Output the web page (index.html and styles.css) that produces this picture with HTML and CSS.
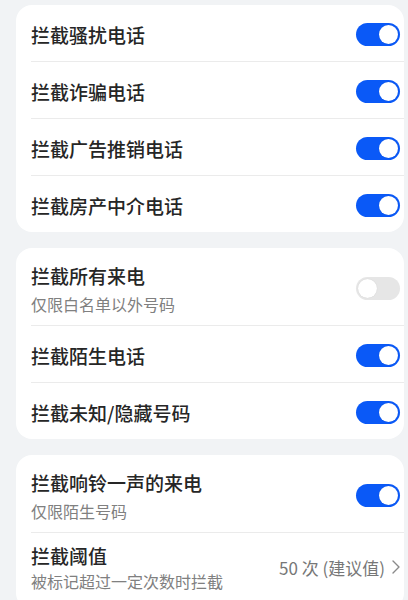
FILE: index.html
```html
<!DOCTYPE html>
<html lang="zh-CN">
<head>
    <meta charset="UTF-8">
    <meta name="viewport" content="width=device-width, initial-scale=1.0">
    <title>拦截设置</title>
    <link rel="stylesheet" href="styles.css">
</head>
<body>
    <div class="settings">
        <!-- 标记号码拦截 -->
        <div class="card">
            <div class="row">
                <span class="title">拦截骚扰电话</span>
                <span class="switch on"></span>
            </div>
            <div class="row">
                <span class="title">拦截诈骗电话</span>
                <span class="switch on"></span>
            </div>
            <div class="row">
                <span class="title">拦截广告推销电话</span>
                <span class="switch on"></span>
            </div>
            <div class="row">
                <span class="title">拦截房产中介电话</span>
                <span class="switch on"></span>
            </div>
        </div>

        <!-- 来电范围 -->
        <div class="card">
            <div class="row tall">
                <div class="text">
                    <span class="title">拦截所有来电</span>
                    <span class="sub">仅限白名单以外号码</span>
                </div>
                <span class="switch"></span>
            </div>
            <div class="row">
                <span class="title">拦截陌生电话</span>
                <span class="switch on"></span>
            </div>
            <div class="row">
                <span class="title">拦截未知/隐藏号码</span>
                <span class="switch on"></span>
            </div>
        </div>

        <!-- 其他 -->
        <div class="card">
            <div class="row tall">
                <div class="text">
                    <span class="title">拦截响铃一声的来电</span>
                    <span class="sub">仅限陌生号码</span>
                </div>
                <span class="switch on"></span>
            </div>
            <div class="row tall compact">
                <div class="text">
                    <span class="title">拦截阈值</span>
                    <span class="sub">被标记超过一定次数时拦截</span>
                </div>
                <span class="value">50 次 (建议值)
                    <svg class="chevron" width="8" height="14" viewBox="0 0 8 14">
                        <path d="M1 1 L7 7 L1 13" fill="none" stroke="#8a8a8a" stroke-width="1.4" stroke-linecap="round" stroke-linejoin="round"/>
                    </svg>
                </span>
            </div>
        </div>
    </div>
</body>
</html>
```

FILE: styles.css
```css
/* General Styles */
body {
    font-family: "Noto Sans CJK SC", "Noto Sans", sans-serif;
    margin: 0;
    padding: 0;
    background-color: #f1f3f5;
    color: #262626;
}

.settings {
    display: flex;
    flex-direction: column;
    gap: 16px;
    padding: 5px 4px 0 16px;
}

/* Cards */
.card {
    background-color: #fff;
    border-radius: 16px;
    padding-left: 15px;
}

.row {
    box-sizing: border-box;
    display: flex;
    align-items: center;
    justify-content: space-between;
    min-height: 57px;
    padding: 3px 4px 0 0;
    border-top: 1px solid #ebebeb;
}

.row:first-child {
    min-height: 56px;
    border-top: none;
}

.row.tall {
    min-height: 77px;
    padding-top: 4px;
}

.row.compact {
    padding: 0 4px 8px 0;
}

.text {
    display: flex;
    flex-direction: column;
    gap: 4px;
}

.compact .text {
    gap: 1px;
}

.title {
    font-size: 19px;
    font-weight: 500;
    line-height: 26px;
}

.sub {
    font-size: 16px;
    line-height: 22px;
    color: #808080;
}

/* Switch */
.switch {
    position: relative;
    width: 44px;
    height: 23px;
    border-radius: 12px;
    background-color: #e6e6e6;
    flex-shrink: 0;
}

.switch::after {
    content: "";
    position: absolute;
    top: 2px;
    left: 2px;
    width: 19px;
    height: 19px;
    border-radius: 50%;
    background-color: #fff;
    box-shadow: 0 0 1px rgba(0, 0, 0, 0.15);
}

.switch.on {
    background-color: #0a59f7;
}

.switch.on::after {
    left: 23px;
}

/* Value with chevron */
.value {
    display: flex;
    align-items: center;
    gap: 7px;
    font-size: 17px;
    color: #777;
}
```
